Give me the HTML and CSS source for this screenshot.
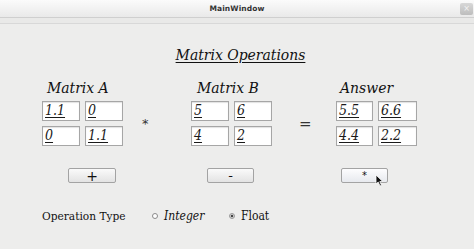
FILE: index.html
```html
<!DOCTYPE html>
<html>
<head>
<meta charset="utf-8">
<link rel="stylesheet" href="styles.css">
</head>
<body>
<div class="titlebar">
  <span class="wtitle">MainWindow</span>
  <span class="close">×</span>
</div>
<div class="menuband"></div>
<div class="content">
  <div class="heading">Matrix Operations</div>
  <div class="mats">
    <div class="group ga">
      <div class="label la">Matrix A</div>
      <div class="grid">
        <div class="cell">1.1</div><div class="cell">0</div>
        <div class="cell">0</div><div class="cell">1.1</div>
      </div>
    </div>
    <div class="op op1">*</div>
    <div class="group gb">
      <div class="label lb">Matrix B</div>
      <div class="grid">
        <div class="cell">5</div><div class="cell">6</div>
        <div class="cell">4</div><div class="cell">2</div>
      </div>
    </div>
    <div class="op op2">=</div>
    <div class="group gc">
      <div class="label lc">Answer</div>
      <div class="grid">
        <div class="cell">5.5</div><div class="cell">6.6</div>
        <div class="cell">4.4</div><div class="cell">2.2</div>
      </div>
    </div>
  </div>
  <div class="buttons">
    <div class="btn b1">+</div>
    <div class="btn b2">-</div>
    <div class="btn b3">*
      <svg class="cursor" width="9" height="13" viewBox="0 0 9 13"><path d="M1 1 L1 10 L3.2 8 L5 12 L6.5 11.3 L4.8 7.6 L7.8 7.6 Z" fill="#111" stroke="#fff" stroke-width="0.8"/></svg>
    </div>
  </div>
  <div class="optype">
    <span class="optlabel">Operation Type</span>
    <span class="radio r1"></span><span class="rlab ital">Integer</span>
    <span class="radio r2 on"></span><span class="rlab">Float</span>
  </div>
</div>
</body>
</html>
```
FILE: styles.css
```css
html, body { margin: 0; padding: 0; }
body {
  width: 474px; height: 249px; overflow: hidden;
  background: #ededec;
  font-family: "DejaVu Serif", serif;
  color: #111;
}
.titlebar {
  height: 17px;
  background: linear-gradient(#fbfbfb, #e9e9e9);
  border-bottom: 1px solid #cfcfcf;
  display: flex; align-items: center; justify-content: center;
  position: relative;
}
.wtitle {
  font-family: "DejaVu Sans", sans-serif; font-weight: bold;
  font-size: 7.5px; color: #333; letter-spacing: 0.1px;
}
.close {
  position: absolute; right: 1px; top: 3px;
  width: 13px; height: 12px;
  background: linear-gradient(#d8d8d8, #bdbdbd);
  border-radius: 2px;
  color: #f4f4f4; font-family: "DejaVu Sans", sans-serif; font-size: 8px;
  line-height: 12px; text-align: center;
}
.menuband {
  height: 5px;
  background: #e9e9e8;
  border-bottom: 1px solid #d8d8d8;
}
.content { height: 226px; }
.heading {
  text-align: center;
  font-family: "DejaVu Serif Condensed", "DejaVu Serif", serif;
  font-stretch: condensed;
  font-style: italic; text-decoration: underline;
  text-decoration-thickness: 1px; text-underline-offset: 2px;
  font-size: 15.5px; padding-top: 21px; padding-left: 7px;
  line-height: 20px; height: 20px;
  color: #111;
}
.mats {
  display: flex; padding-left: 42px; margin-top: 13px;
}
.group { width: 81px; }
.label {
  font-family: "DejaVu Serif Condensed", "DejaVu Serif", serif;
  font-stretch: condensed;
  font-style: italic; font-size: 15.5px; line-height: 20px; height: 20px;
  color: #111;
}
.la { padding-left: 5px; }
.lb { padding-left: 6px; }
.lc { padding-left: 4px; }
.grid {
  display: grid; grid-template-columns: 38px 38px; column-gap: 5px; row-gap: 5px;
  margin-top: 3px;
}
.gc .grid { grid-template-columns: 37px 39px; }
.cell {
  box-sizing: border-box; height: 20px;
  background: #fff; border: 1px solid #a6a6a6;
  box-shadow: inset 0 1px 1px rgba(0,0,0,0.12);
  font-family: "DejaVu Serif Condensed", "DejaVu Serif", serif;
  font-stretch: condensed;
  font-style: italic; text-decoration: underline; text-decoration-thickness: 1px;
  text-underline-offset: 2px;
  font-size: 14px; line-height: 17px; padding-left: 2px; color: #1a1a1a;
}
.op {
  display: flex; align-items: center;
  padding-top: 23px; height: 68px; box-sizing: border-box;
  font-family: "DejaVu Sans", sans-serif; font-size: 13px; color: #333;
}
.op1 { width: 68px; padding-left: 19px; }
.op2 { width: 64px; font-size: 15px; padding-left: 27px; }
.buttons {
  display: flex; margin-top: 22px; height: 15px;
}
.btn {
  box-sizing: border-box; height: 15px;
  border: 1px solid #a3a3a3; border-radius: 2px;
  background: linear-gradient(#fafafa, #e3e3e3);
  display: flex; align-items: center; justify-content: center;
  font-family: "DejaVu Sans", sans-serif; font-size: 13px; color: #111;
  position: relative;
}
.b1 { margin-left: 68px; width: 48px; font-size: 14px; }
.b2 { margin-left: 91px; width: 47px; }
.b3 { margin-left: 87px; width: 47px; font-size: 10px; align-items: flex-start; padding-top: 1px;
  background: linear-gradient(#fdfdfe, #e7e9ee); }
.cursor { position: absolute; left: 33px; top: 5px; }
.optype {
  display: flex; align-items: center; margin-top: 25px; height: 16px;
  font-family: "DejaVu Serif Condensed", "DejaVu Serif", serif; font-stretch: condensed;
  font-size: 11.8px;
}
.optlabel { margin-left: 42px; width: 108px; }
.radio {
  box-sizing: border-box; width: 6px; height: 6px; border-radius: 50%;
  border: 1px solid #8a8a8a; background: #fff; margin-right: 6px;
}
.radio.on { background: radial-gradient(circle, #444 0 1.4px, #d8d8d8 1.6px); border-color: #999; }
.rlab { font-size: 12px; }
.ital { font-style: italic; width: 63px; }
.r1 { margin-left: 2px; }
.r2 { margin-left: 2px; }
```
